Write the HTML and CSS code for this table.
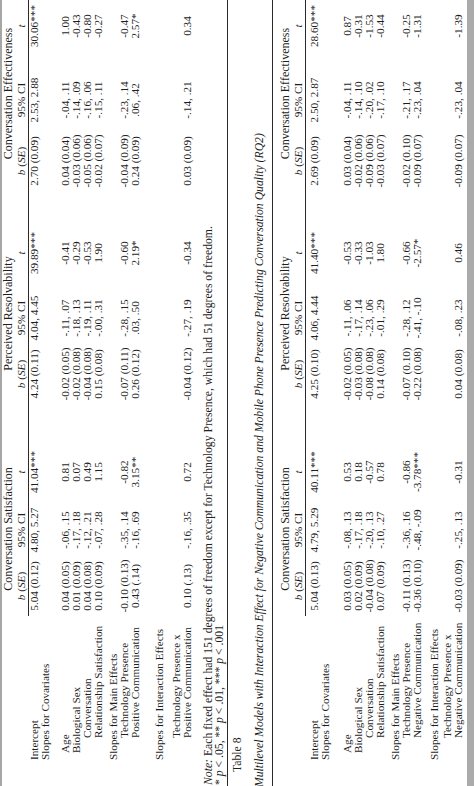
FILE: index.html
```html
<!DOCTYPE html>
<html lang="en">
<head>
<meta charset="utf-8">
<title>Table 8</title>
<link rel="stylesheet" href="styles.css">
</head>
<body>
<div class="viewport">
  <div class="page">
    <section class="table t7">
      <div class="row hdr1"><span></span><span class="g1">Conversation Satisfaction</span><span class="g2">Perceived Resolvability</span><span class="g3">Conversation Effectiveness</span></div>
      <div class="row hdr2"><span></span><span><i>b</i> (<i>SE</i>)</span><span>95% CI</span><span><i>t</i></span><span><i>b</i> (<i>SE</i>)</span><span>95% CI</span><span><i>t</i></span><span><i>b</i> (<i>SE</i>)</span><span>95% CI</span><span><i>t</i></span></div>
      <div class="rule-head"></div>
      <div class="row"><span>Intercept</span><span>5.04 (0.12)</span><span>4.80, 5.27</span><span>41.04***</span><span>4.24 (0.11)</span><span>4.04, 4.45</span><span>39.89***</span><span>2.70 (0.09)</span><span>2.53, 2.88</span><span>30.06***</span></div>
      <div class="row"><span>Slopes for Covariates</span></div>
      <div class="row gap-cov"><span class="i1">Age</span><span>0.04 (0.05)</span><span>-.06, .15</span><span>0.81</span><span>-0.02 (0.05)</span><span>-.11, .07</span><span>-0.41</span><span>0.04 (0.04)</span><span>-.04, .11</span><span>1.00</span></div>
      <div class="row"><span class="i1">Biological Sex</span><span>0.01 (0.09)</span><span>-.17, .18</span><span>0.07</span><span>-0.02 (0.08)</span><span>-.18, .13</span><span>-0.29</span><span>-0.03 (0.06)</span><span>-.14, .09</span><span>-0.43</span></div>
      <div class="row"><span class="i2">Conversation</span><span>0.04 (0.08)</span><span>-.12, .21</span><span>0.49</span><span>-0.04 (0.08)</span><span>-.19, .11</span><span>-0.53</span><span>-0.05 (0.06)</span><span>-.16, .06</span><span>-0.80</span></div>
      <div class="row"><span class="i2">Relationship Satisfaction</span><span>0.10 (0.09)</span><span>-.07, .28</span><span>1.15</span><span>0.15 (0.08)</span><span>-.00, .31</span><span>1.90</span><span>-0.02 (0.07)</span><span>-.15, .11</span><span>-0.27</span></div>
      <div class="row gap-main"><span>Slopes for Main Effects</span></div>
      <div class="row"><span class="i2">Technology Presence</span><span>-0.10 (0.13)</span><span>-.35, .14</span><span>-0.82</span><span>-0.07 (0.11)</span><span>-.28, .15</span><span>-0.60</span><span>-0.04 (0.09)</span><span>-.23, .14</span><span>-0.47</span></div>
      <div class="row"><span class="i2">Positive Communication</span><span>0.43 (.14)</span><span>-.16, .69</span><span>3.15**</span><span>0.26 (0.12)</span><span>.03, .50</span><span>2.19*</span><span>0.24 (0.09)</span><span>.06, .42</span><span>2.57*</span></div>
      <div class="row gap-inter"><span>Slopes for Interaction Effects</span></div>
      <div class="row two gap-two"><span class="i2">Technology Presence x<br>Positive Communication</span><span>0.10 (.13)</span><span>-.16, .35</span><span>0.72</span><span>-0.04 (0.12)</span><span>-.27, .19</span><span>-0.34</span><span>0.03 (0.09)</span><span>-.14, .21</span><span>0.34</span></div>
    </section>
    <div class="note">
      <p class="note-line"><i>Note:</i> Each fixed effect had 151 degrees of freedom except for Technology Presence, which had 51 degrees of freedom.</p>
      <p class="note-line">* <i>p</i> &lt; .05, ** <i>p</i> &lt; .01, *** <i>p</i> &lt; .001</p>
    </div>
    <div class="rule-bottom"></div>
    <p class="caption">Table 8</p>
    <p class="title">Multilevel Models with Interaction Effect for Negative Communication and Mobile Phone Presence Predicting Conversation Quality (RQ2)</p>
    <section class="table t8">
      <div class="rule-top"></div>
      <div class="row hdr1"><span></span><span class="g1">Conversation Satisfaction</span><span class="g2">Perceived Resolvability</span><span class="g3">Conversation Effectiveness</span></div>
      <div class="row hdr2"><span></span><span><i>b</i> (<i>SE</i>)</span><span>95% CI</span><span><i>t</i></span><span><i>b</i> (<i>SE</i>)</span><span>95% CI</span><span><i>t</i></span><span><i>b</i> (<i>SE</i>)</span><span>95% CI</span><span><i>t</i></span></div>
      <div class="rule-head"></div>
      <div class="row"><span>Intercept</span><span>5.04 (0.13)</span><span>4.79, 5.29</span><span>40.11***</span><span>4.25 (0.10)</span><span>4.06, 4.44</span><span>41.40***</span><span>2.69 (0.09)</span><span>2.50, 2.87</span><span>28.60***</span></div>
      <div class="row"><span>Slopes for Covariates</span></div>
      <div class="row gap-cov8"><span class="i1">Age</span><span>0.03 (0.05)</span><span>-.08, .13</span><span>0.53</span><span>-0.02 (0.05)</span><span>-.11, .06</span><span>-0.53</span><span>0.03 (0.04)</span><span>-.04, .11</span><span>0.87</span></div>
      <div class="row"><span class="i1">Biological Sex</span><span>0.02 (0.09)</span><span>-.17, .18</span><span>0.18</span><span>-0.03 (0.08)</span><span>-.17, .14</span><span>-0.33</span><span>-0.02 (0.06)</span><span>-.14, .10</span><span>-0.31</span></div>
      <div class="row"><span class="i2">Conversation</span><span>-0.04 (0.08)</span><span>-.20, .13</span><span>-0.57</span><span>-0.08 (0.08)</span><span>-.23, .06</span><span>-1.03</span><span>-0.09 (0.06)</span><span>-.20, .02</span><span>-1.53</span></div>
      <div class="row"><span class="i2">Relationship Satisfaction</span><span>0.07 (0.09)</span><span>-.10, .27</span><span>0.78</span><span>0.14 (0.08)</span><span>-.01, .29</span><span>1.80</span><span>-0.03 (0.07)</span><span>-.17, .10</span><span>-0.44</span></div>
      <div class="row gap-main"><span>Slopes for Main Effects</span></div>
      <div class="row"><span class="i2">Technology Presence</span><span>-0.11 (0.13)</span><span>-.36, .16</span><span>-0.86</span><span>-0.07 (0.10)</span><span>-.28, .12</span><span>-0.66</span><span>-0.02 (0.10)</span><span>-.21, .17</span><span>-0.25</span></div>
      <div class="row"><span class="i2">Negative Communication</span><span>-0.36 (0.10)</span><span>-.48, -.09</span><span>-3.78***</span><span>-0.22 (0.08)</span><span>-.41, -.10</span><span>-2.57*</span><span>-0.09 (0.07)</span><span>-.23, .04</span><span>-1.31</span></div>
      <div class="row gap-inter8"><span>Slopes for Interaction Effects</span></div>
      <div class="row two gap-two8"><span class="i2">Technology Presence x<br>Negative Communication</span><span>-0.03 (0.09)</span><span>-.25, .13</span><span>-0.31</span><span>0.04 (0.08)</span><span>-.08, .23</span><span>0.46</span><span>-0.09 (0.07)</span><span>-.23, .04</span><span>-1.39</span></div>
    </section>
    <div class="page-edge"></div>
  </div>
</div>
</body>
</html>
```
FILE: styles.css
```css
html, body {
  margin: 0;
  padding: 0;
  background: #ffffff;
}

.viewport {
  width: 474px;
  height: 786px;
  overflow: hidden;
  background: #ffffff;
}

/* The scanned page is landscape; it is shown turned a quarter turn counter-clockwise. */
.page {
  width: 786px;
  height: 474px;
  box-sizing: border-box;
  border-top: 2px solid #a6a6a6;
  transform-origin: 0 0;
  transform: translateY(786px) rotate(-90deg);
  font-family: "Liberation Serif", "Times New Roman", serif;
  font-size: 11.7px;
  line-height: 11px;
  color: #1e1e1e;
  display: flex;
  flex-direction: column;
  overflow: hidden;
}

.row {
  display: grid;
  grid-template-columns: 154px 40px 16px 40px 18px 40px 58px 40px 16px 40px 25px 40px 52px 40px 21px 40px 34px 40px;
  margin-left: 26px;
  height: 11px;
  font-size: 11.2px;
  white-space: nowrap;
  flex: none;
}

.row > * { justify-self: center; grid-row: 1; }
.row > :nth-child(1) { grid-column: 1; justify-self: start; }
.row > :nth-child(2) { grid-column: 2; }
.row > :nth-child(3) { grid-column: 4; }
.row > :nth-child(4) { grid-column: 6; }
.row > :nth-child(5) { grid-column: 8; }
.row > :nth-child(6) { grid-column: 10; }
.row > :nth-child(7) { grid-column: 12; }
.row > :nth-child(8) { grid-column: 14; }
.row > :nth-child(9) { grid-column: 16; }
.row > :nth-child(10) { grid-column: 18; }

.row > .g1 { grid-column: 2 / 7; }
.row > .g2 { grid-column: 8 / 13; }
.row > .g3 { grid-column: 14 / 19; }

.row.hdr1 { font-size: 12px; }

.i1 { padding-left: 7px; }
.i2 { padding-left: 22px; }

.t7 .hdr1 { margin-top: 0.5px; }
.hdr2 { margin-top: 2px; height: 12px; }

.rule-head {
  height: 1px;
  background: #2a2a2a;
  margin-left: 170px;
  flex: none;
}

.t7 .gap-cov { margin-top: 9px; }
.t7 .gap-main { margin-top: 4px; }
.t7 .gap-inter { margin-top: 13px; }
.t7 .gap-two { margin-top: 6px; }

.row.two { height: 22px; align-items: end; }

.note { margin-top: 10px; margin-left: 1px; white-space: nowrap; flex: none; }
.note-line { margin: 0; }

.rule-bottom {
  height: 1px;
  background: #2a2a2a;
  margin-top: 2px;
  flex: none;
}

.caption { margin: 4px 0 0 14px; flex: none; }

.title {
  margin: 11px 0 0 -1px;
  font-style: italic;
  white-space: nowrap;
  flex: none;
}

.rule-top {
  height: 1px;
  background: #2a2a2a;
  margin-top: 7px;
}

.t8 .hdr1 { margin-top: 7px; }
.t8 .rule-head { margin-bottom: 3px; }
.t8 .gap-cov8 { margin-top: 11px; }
.t8 .gap-main { margin-top: 4px; }
.t8 .gap-inter8 { margin-top: 6px; }
.t8 .gap-two8 { margin-top: 2px; }

.page-edge {
  margin-top: auto;
  height: 7px;
  background: #ababab;
  flex: none;
}
```
